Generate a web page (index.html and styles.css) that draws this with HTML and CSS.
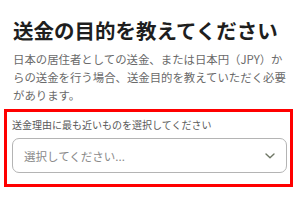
FILE: index.html
```html
<!DOCTYPE html>
<html lang="ja">
<head>
  <meta charset="UTF-8">
  <meta name="viewport" content="width=device-width, initial-scale=1.0">
  <title>送金の目的</title>
  <link rel="stylesheet" href="styles.css">
</head>
<body>
  <div class="page">
    <h1 class="title">送金の目的を教えてください</h1>
    <p class="lead">日本の居住者としての送金、または日本円（JPY）からの送金を行う場合、送金目的を教えていただく必要があります。</p>

    <div class="purpose-box">
      <label class="field-label" for="purpose">送金理由に最も近いものを選択してください</label>
      <div class="select">
        <span class="placeholder">選択してください...</span>
        <svg class="chevron" width="10" height="6" viewBox="0 0 10 6">
          <path d="M1 1 L5 4.8 L9 1" fill="none" stroke="#6f7765" stroke-width="1.4" stroke-linecap="round" stroke-linejoin="round"/>
        </svg>
      </div>
    </div>
  </div>
</body>
</html>
```

FILE: styles.css
```css
body {
  margin: 0;
  padding: 0;
  background: #fff;
  font-family: "Noto Sans CJK JP", "Noto Sans", sans-serif;
}

.page {
  padding: 16px 7px 0 4px;
}

.title {
  margin: 0 0 0 9px;
  font-size: 20.5px;
  font-weight: 700;
  line-height: 28px;
  color: #1e1e1e;
}

.lead {
  margin: 6px 0 0 9px;
  font-size: 11.4px;
  line-height: 18px;
  color: #6a6a6a;
}

.purpose-box {
  margin-top: 5px;
  border: 3px solid #ff0000;
  padding: 6px 3px 11px 5px;
}

.field-label {
  display: block;
  font-size: 10px;
  line-height: 14px;
  color: #5a5a5a;
}

.select {
  margin-top: 6px;
  height: 33px;
  border: 1px solid #b4b4b4;
  border-radius: 7px;
  display: flex;
  align-items: center;
  justify-content: space-between;
  padding: 0 11px 0 11px;
}

.placeholder {
  font-size: 11.5px;
  color: #8a8a8a;
}

.chevron {
  display: block;
}
```
